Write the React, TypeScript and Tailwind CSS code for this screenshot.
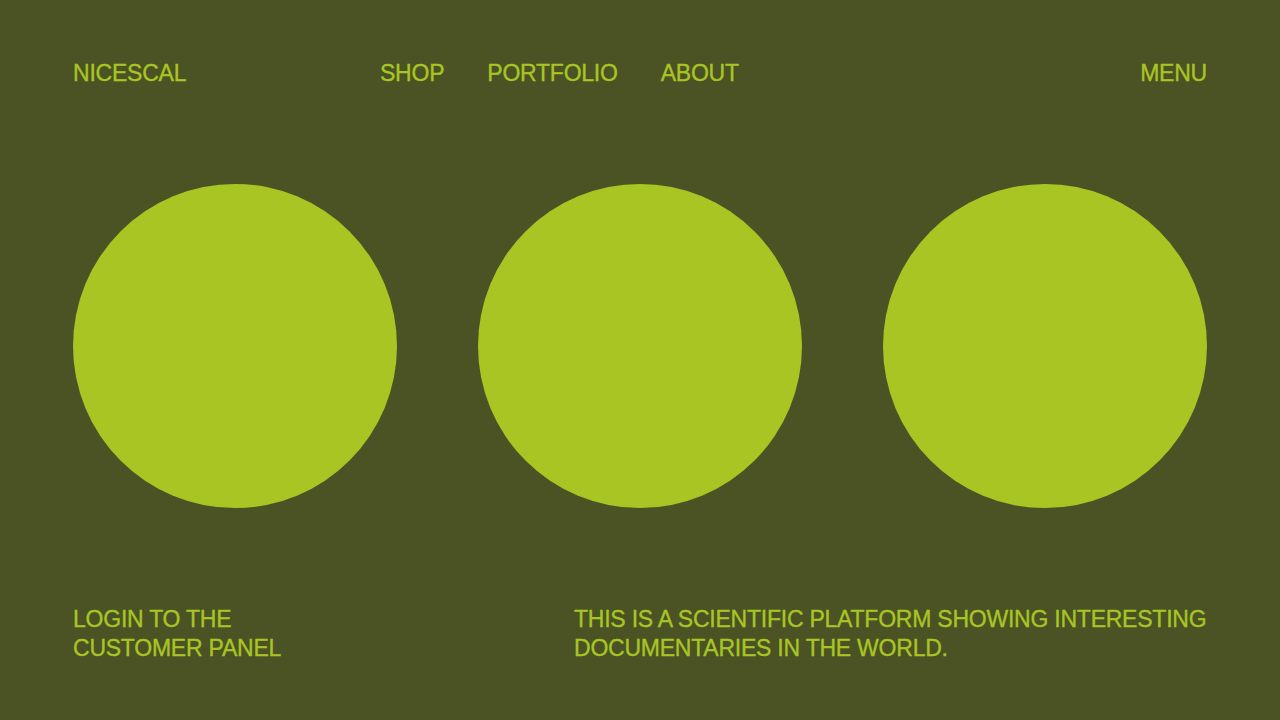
import React from 'react';

const navLinks = ['SHOP', 'PORTFOLIO', 'ABOUT'];

const App = () => {
  return (
    <div
      className="w-full h-[720px] bg-[#4b5325] text-[#a9c523] px-[73px] flex flex-col text-[23px] leading-[29px] tracking-[-0.01em] [-webkit-text-stroke:0.35px_#a9c523]"
      style={{ fontFamily: '"Liberation Sans", Arial, sans-serif' }}
    >
      {/* Header */}
      <header className="flex items-center pt-[59px]">
        <div className="w-[307px]">NICESCAL</div>
        <nav className="flex gap-[43px]">
          {navLinks.map((link) => (
            <a key={link} href="#">
              {link}
            </a>
          ))}
        </nav>
        <a href="#" className="ml-auto">
          MENU
        </a>
      </header>

      {/* Circles */}
      <div className="flex justify-between mt-[96px]">
        <div className="w-[324px] h-[324px] rounded-full bg-[#a9c523]"></div>
        <div className="w-[324px] h-[324px] rounded-full bg-[#a9c523]"></div>
        <div className="w-[324px] h-[324px] rounded-full bg-[#a9c523]"></div>
      </div>

      {/* Footer text */}
      <div className="flex mt-[97px]">
        <p className="w-[501px]">
          LOGIN TO THE
          <br />
          CUSTOMER PANEL
        </p>
        <p>
          THIS IS A SCIENTIFIC PLATFORM SHOWING INTERESTING
          <br />
          DOCUMENTARIES IN THE WORLD.
        </p>
      </div>
    </div>
  );
};

export default App;
